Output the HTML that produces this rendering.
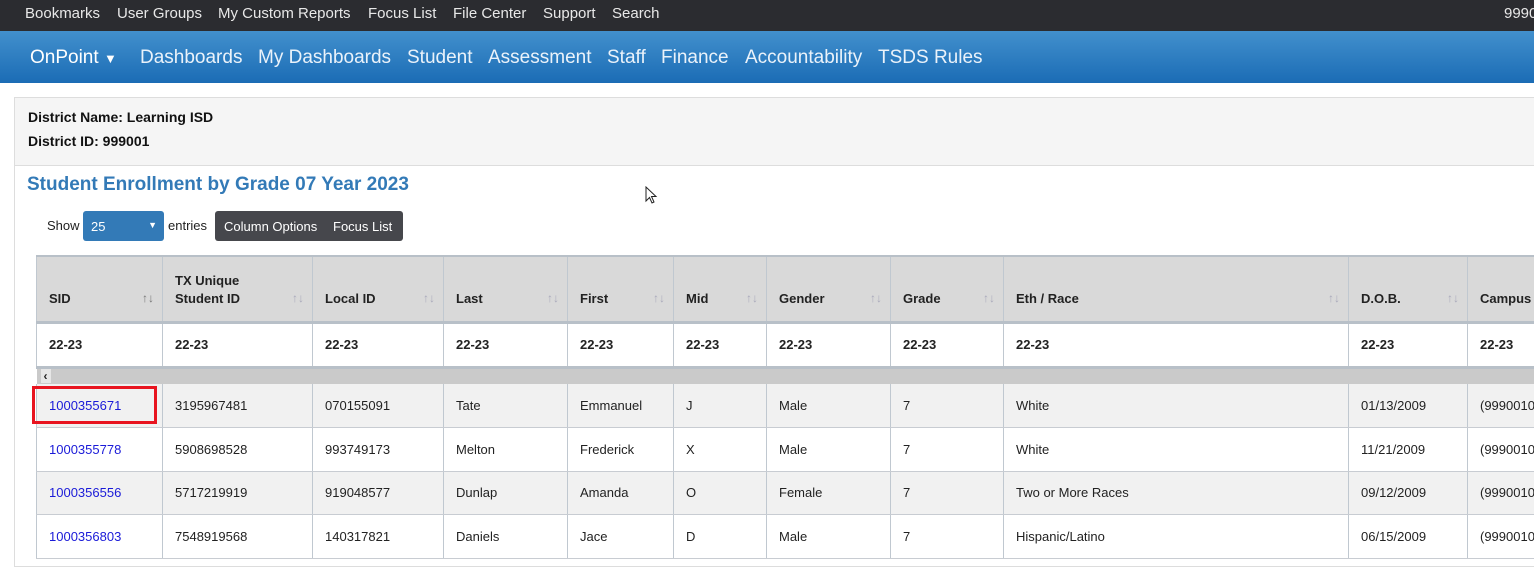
<!DOCTYPE html>
<html><head><style>
*{margin:0;padding:0;box-sizing:border-box}
body{width:1534px;height:556px;overflow:hidden;background:#fff;font-family:"Liberation Sans",Arial,sans-serif;position:relative}
.top{position:absolute;left:0;top:0;width:1534px;height:31px;background:#2b2c30;color:#e8e8e8;font-size:15px}
.top span{position:absolute;top:5px}
.nav{position:absolute;left:0;top:31px;width:1534px;height:52px;background:linear-gradient(#4290cd,#1b6cb5);color:#eaf2fa;font-size:19px}
.nav span{position:absolute;top:16px}
.panel{position:absolute;left:14px;top:97px;width:1530px;height:470px;border:1px solid #ddd;border-right:none}
.ph{position:absolute;left:0;top:0;width:100%;height:68px;background:#f5f5f5;border-bottom:1px solid #ddd;font-weight:bold;font-size:14px;color:#111}
h1{position:absolute;left:27px;top:174px;font-size:19px;color:#337ab7;font-weight:bold}
.abs{position:absolute}
table{position:absolute;left:36px;top:255px;border-collapse:collapse;font-size:13px;color:#222;table-layout:fixed;width:1520px}
td{border-left:1px solid #c0c8d0;border-right:1px solid #c0c8d0;padding:0 12px;vertical-align:middle;white-space:nowrap;overflow:hidden}
tr.h td{background:#d9d9d9;font-weight:bold;height:66px;padding-top:20px;border-top:2px solid #b8c0c8;border-bottom:3px solid #b8c0c8;position:relative}
tr.h td i{position:absolute;right:8px;top:34px;font-style:normal;color:#aab;font-size:12px;font-weight:normal}
tr.f td{height:45px;font-weight:bold;background:#fff;border-bottom:3px solid #b8c0c8}
tr.s td{height:17px;background:#cacaca;border:none;padding:0 4px;font-size:12px}
tr.r td{height:43.5px;border-bottom:1px solid #c8ccd2}
tr.g td{background:#f1f1f1}
a{color:#1a1ad8;text-decoration:none}
</style></head><body>
<div class="top"><span style="left:25px">Bookmarks</span><span style="left:117px">User Groups</span><span style="left:218px">My Custom Reports</span><span style="left:368px">Focus List</span><span style="left:453px">File Center</span><span style="left:543px">Support</span><span style="left:612px">Search</span><span style="left:1504px">9990</span></div>
<div class="nav"><span style="left:30px;color:#fff">OnPoint <span style="position:static;font-size:13px">&#9660;</span></span><span style="left:140px">Dashboards</span><span style="left:258px">My Dashboards</span><span style="left:407px">Student</span><span style="left:488px">Assessment</span><span style="left:607px">Staff</span><span style="left:661px">Finance</span><span style="left:745px">Accountability</span><span style="left:878px">TSDS Rules</span></div>
<div class="panel"><div class="ph"><div class="abs" style="left:13px;top:11px">District Name: Learning ISD</div><div class="abs" style="left:13px;top:35px">District ID: 999001</div></div></div>
<h1>Student Enrollment by Grade 07 Year 2023</h1>
<div class="abs" style="left:47px;top:218px;font-size:13px;color:#222">Show</div>
<div class="abs" style="left:83px;top:211px;width:81px;height:30px;background:#337ab7;border-radius:3px;color:#fff;font-size:13px;padding:8px 8px">25<span style="position:absolute;right:7px;top:9px;font-size:9px">&#9660;</span></div>
<div class="abs" style="left:168px;top:218px;font-size:13px;color:#222">entries</div>
<div class="abs" style="left:215px;top:211px;width:188px;height:30px;background:#46474c;border-radius:3px;color:#fff;font-size:13px"><span class="abs" style="left:9px;top:8px">Column Options</span><span class="abs" style="left:118px;top:8px">Focus List</span></div>
<table>
<colgroup><col style="width:126px"><col style="width:150px"><col style="width:131px"><col style="width:124px"><col style="width:106px"><col style="width:93px"><col style="width:124px"><col style="width:113px"><col style="width:345px"><col style="width:119px"><col style="width:89px"></colgroup>
<tr class="h"><td>SID<i style="color:#777">↑↓</i></td><td><span style="position:absolute;top:16px;left:12px">TX Unique</span>Student ID<i>↑↓</i></td><td>Local ID<i>↑↓</i></td><td>Last<i>↑↓</i></td><td>First<i>↑↓</i></td><td>Mid<i>↑↓</i></td><td>Gender<i>↑↓</i></td><td>Grade<i>↑↓</i></td><td>Eth / Race<i>↑↓</i></td><td>D.O.B.<i>↑↓</i></td><td>Campus</td></tr>
<tr class="f"><td>22-23</td><td>22-23</td><td>22-23</td><td>22-23</td><td>22-23</td><td>22-23</td><td>22-23</td><td>22-23</td><td>22-23</td><td>22-23</td><td>22-23</td></tr>
<tr class="s"><td colspan="11"><span style="background:#e6e6e6;padding:0 3px;font-weight:bold">&#8249;</span></td></tr>
<tr class="r g"><td><a>1000355671</a></td><td>3195967481</td><td>070155091</td><td>Tate</td><td>Emmanuel</td><td>J</td><td>Male</td><td>7</td><td>White</td><td>01/13/2009</td><td>(99900104</td></tr>
<tr class="r"><td><a>1000355778</a></td><td>5908698528</td><td>993749173</td><td>Melton</td><td>Frederick</td><td>X</td><td>Male</td><td>7</td><td>White</td><td>11/21/2009</td><td>(99900104</td></tr>
<tr class="r g"><td><a>1000356556</a></td><td>5717219919</td><td>919048577</td><td>Dunlap</td><td>Amanda</td><td>O</td><td>Female</td><td>7</td><td>Two or More Races</td><td>09/12/2009</td><td>(99900104</td></tr>
<tr class="r"><td><a>1000356803</a></td><td>7548919568</td><td>140317821</td><td>Daniels</td><td>Jace</td><td>D</td><td>Male</td><td>7</td><td>Hispanic/Latino</td><td>06/15/2009</td><td>(99900104</td></tr>
</table>
<div class="abs" style="left:32px;top:386px;width:125px;height:38px;border:3.5px solid #e8141f"></div>
<svg class="abs" style="left:645px;top:186px" width="14" height="20"><path d="M1 1 L1 15 L4.5 11.5 L7 17 L9 16 L6.5 10.5 L11 10.5 Z" fill="#fff" stroke="#222" stroke-width="1"/></svg>
</body></html>
